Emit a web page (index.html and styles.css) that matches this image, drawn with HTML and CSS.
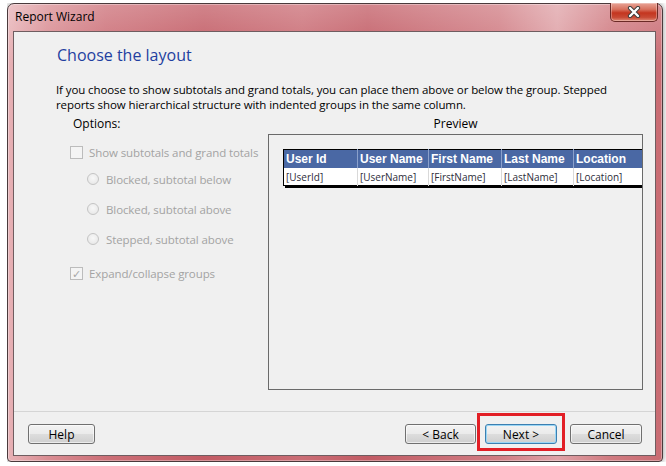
FILE: index.html
```html
<!DOCTYPE html>
<html lang="en">
<head>
    <meta charset="UTF-8">
    <title>Report Wizard</title>
    <link rel="stylesheet" href="styles.css">
</head>
<body>
    <div class="window">
        <div class="titlebar">
            <span class="title">Report Wizard</span>
            <button class="close-btn" title="Close">
                <svg width="16" height="12" viewBox="0 0 16 12">
                    <path d="M4 2 L12 10 M12 2 L4 10" stroke="#3a3a3a" stroke-width="4.2" stroke-linecap="round"/>
                    <path d="M4 2 L12 10 M12 2 L4 10" stroke="#ffffff" stroke-width="2.4" stroke-linecap="round"/>
                </svg>
            </button>
        </div>
        <div class="client">
            <div class="main">
                <h1>Choose the layout</h1>
                <p class="intro">If you choose to show subtotals and grand totals, you can place them above or below the group. Stepped<br>reports show hierarchical structure with indented groups in the same column.</p>
                <div class="layout">
                    <div class="options">
                        <div class="section-label">Options:</div>
                        <label class="opt check"><span class="box"></span>Show subtotals and grand totals</label>
                        <label class="opt sub"><span class="dot"></span>Blocked, subtotal below</label>
                        <label class="opt sub"><span class="dot"></span>Blocked, subtotal above</label>
                        <label class="opt sub"><span class="dot"></span>Stepped, subtotal above</label>
                        <label class="opt check"><span class="box">&#10003;</span>Expand/collapse groups</label>
                    </div>
                    <div class="preview">
                        <div class="section-label center">Preview</div>
                        <div class="preview-box">
                            <table class="sample">
                                <colgroup>
                                    <col style="width: 74px">
                                    <col style="width: 71px">
                                    <col style="width: 73px">
                                    <col style="width: 72px">
                                    <col style="width: 74px">
                                </colgroup>
                                <tr>
                                    <th>User Id</th>
                                    <th>User Name</th>
                                    <th>First Name</th>
                                    <th>Last Name</th>
                                    <th>Location</th>
                                </tr>
                                <tr>
                                    <td>[UserId]</td>
                                    <td>[UserName]</td>
                                    <td>[FirstName]</td>
                                    <td>[LastName]</td>
                                    <td>[Location]</td>
                                </tr>
                            </table>
                        </div>
                    </div>
                </div>
            </div>
            <div class="footer">
                <button class="btn help">Help</button>
                <div class="spacer"></div>
                <button class="btn">&lt; Back</button>
                <span class="marked"><button class="btn default">Next &gt;</button></span>
                <button class="btn">Cancel</button>
            </div>
        </div>
    </div>
</body>
</html>
```

FILE: styles.css
```css
body {
    margin: 3px 0 0 7px;
    background: #ffffff;
    font-family: "Open Sans", "Noto Sans", sans-serif;
    font-size: 12px;
    color: #000;
}

.window {
    box-sizing: border-box;
    width: 656px;
    height: 459px;
    border: 1px solid #4a3a3c;
    border-radius: 7px 7px 4px 4px;
    padding: 0 6px 5px 5px;
    display: flex;
    flex-direction: column;
    background:
        linear-gradient(to bottom, rgba(255, 255, 255, 0.25), rgba(255, 255, 255, 0) 60px),
        linear-gradient(to right, #e7b2b6 0%, #d98d93 6%, #cc6f77 15%, #c25b64 30%, #ca6d75 45%, #c25c65 55%, #d07c83 75%, #dfa2a7 84%, #d07b81 92%, #c96b72 100%);
    box-shadow: 0 0 6px rgba(0, 0, 0, 0.45), inset 0 0 0 1px rgba(255, 255, 255, 0.35);
}

.titlebar {
    height: 27px;
    display: flex;
    justify-content: space-between;
    align-items: flex-start;
}

.title {
    padding: 4px 0 0 2px;
    line-height: 17px;
    color: #000;
}

.close-btn {
    width: 48px;
    height: 19px;
    margin: -1px -2px 0 0;
    padding: 0;
    border: 1px solid #6b2a26;
    border-top: none;
    border-radius: 0 0 5px 5px;
    background: linear-gradient(to bottom, #e8a497 0%, #d8725f 35%, #c4351f 55%, #c84a35 80%, #e08a76 100%);
    box-shadow: inset 0 0 0 1px rgba(255, 255, 255, 0.3);
    display: flex;
    justify-content: center;
    align-items: center;
}

.client {
    flex: 1;
    display: flex;
    flex-direction: column;
    border: 1px solid #6f5d60;
    background: #f0f0f0;
}

.main {
    flex: 1;
    padding: 12px 12px 0 42px;
}

h1 {
    margin: 0;
    padding-left: 1px;
    font-size: 16px;
    font-weight: normal;
    line-height: 22px;
    color: #1f3fa0;
}

.intro {
    margin: 16px 0 0 0;
    font-size: 11.5px;
    line-height: 15px;
    letter-spacing: -0.1px;
}

.layout {
    margin-top: 5px;
    display: flex;
}

.options {
    width: 212px;
}

.section-label {
    line-height: 14px;
    padding-left: 17px;
}

.section-label.center {
    padding-left: 0;
    margin-bottom: 3px;
    text-align: center;
}

.opt {
    display: flex;
    align-items: center;
    height: 16px;
    margin-top: 14px;
    color: #a3a3a3;
    font-size: 11.5px;
    white-space: nowrap;
    letter-spacing: -0.1px;
}

.section-label + .opt {
    margin-top: 13px;
}

.check + .sub {
    margin-top: 11px;
}

.sub + .check {
    margin-top: 18px;
}

.check {
    padding-left: 14px;
}

.sub {
    padding-left: 31px;
}

.box {
    box-sizing: border-box;
    width: 13px;
    height: 13px;
    margin-right: 6px;
    border: 1px solid #bcbcbc;
    background: #f4f4f4;
    font-size: 11px;
    line-height: 11px;
    text-align: center;
    color: #a8a8a8;
    letter-spacing: 0;
}

.dot {
    box-sizing: border-box;
    width: 12px;
    height: 12px;
    margin-right: 7px;
    border: 1px solid #c4c4c4;
    border-radius: 50%;
    background: radial-gradient(circle at 50% 40%, #f8f8f8, #e4e4e4);
}

.preview {
    width: 375px;
}

.preview-box {
    box-sizing: border-box;
    height: 256px;
    border: 1px solid #6a6a6a;
    padding: 14px 0 0 14px;
    overflow: hidden;
}

.sample {
    border-collapse: collapse;
    table-layout: fixed;
    width: 364px;
    border: 1px solid #000;
    box-shadow: 2px 2px 0 #000;
    background: #fff;
}

.sample th {
    height: 18px;
    padding: 0 0 0 2px;
    background: #4a68a4;
    border-left: 1px solid #8aa0cb;
    color: #fff;
    font-family: "Liberation Sans", Arial, sans-serif;
    font-size: 12px;
    font-weight: bold;
    text-align: left;
    white-space: nowrap;
}

.sample td {
    height: 17px;
    padding: 0 0 0 2px;
    border-left: 1px solid #d9d9d9;
    color: #2d2d3a;
    font-size: 10px;
    white-space: nowrap;
}

.sample th:first-child,
.sample td:first-child {
    border-left: none;
}

.footer {
    display: flex;
    align-items: center;
    border-top: 1px solid #d5d5d5;
    padding: 12px 13px 11px 14px;
}

.spacer {
    flex: 1;
}

.btn {
    box-sizing: border-box;
    width: 71px;
    height: 20px;
    padding: 0;
    border: 1px solid #707070;
    border-radius: 3px;
    background: linear-gradient(to bottom, #f3f3f3 0%, #ebebeb 48%, #dddddd 52%, #cfcfcf 100%);
    box-shadow: inset 0 0 0 1px rgba(255, 255, 255, 0.6);
    font-family: "Open Sans", "Noto Sans", sans-serif;
    font-size: 12px;
    color: #000;
}

.help {
    width: 67px;
}

.marked {
    position: relative;
    margin: 0 13px 0 9px;
    display: flex;
}

.marked::after {
    content: '';
    position: absolute;
    top: -11px;
    left: -8px;
    right: -8px;
    bottom: -7px;
    border: 3px solid #e21f26;
}

.default {
    width: 72px;
    border-color: #3c7fb1;
    box-shadow: inset 0 0 0 1px #9ad6f5;
}

.footer .btn:last-child {
    width: 72px;
}
```
